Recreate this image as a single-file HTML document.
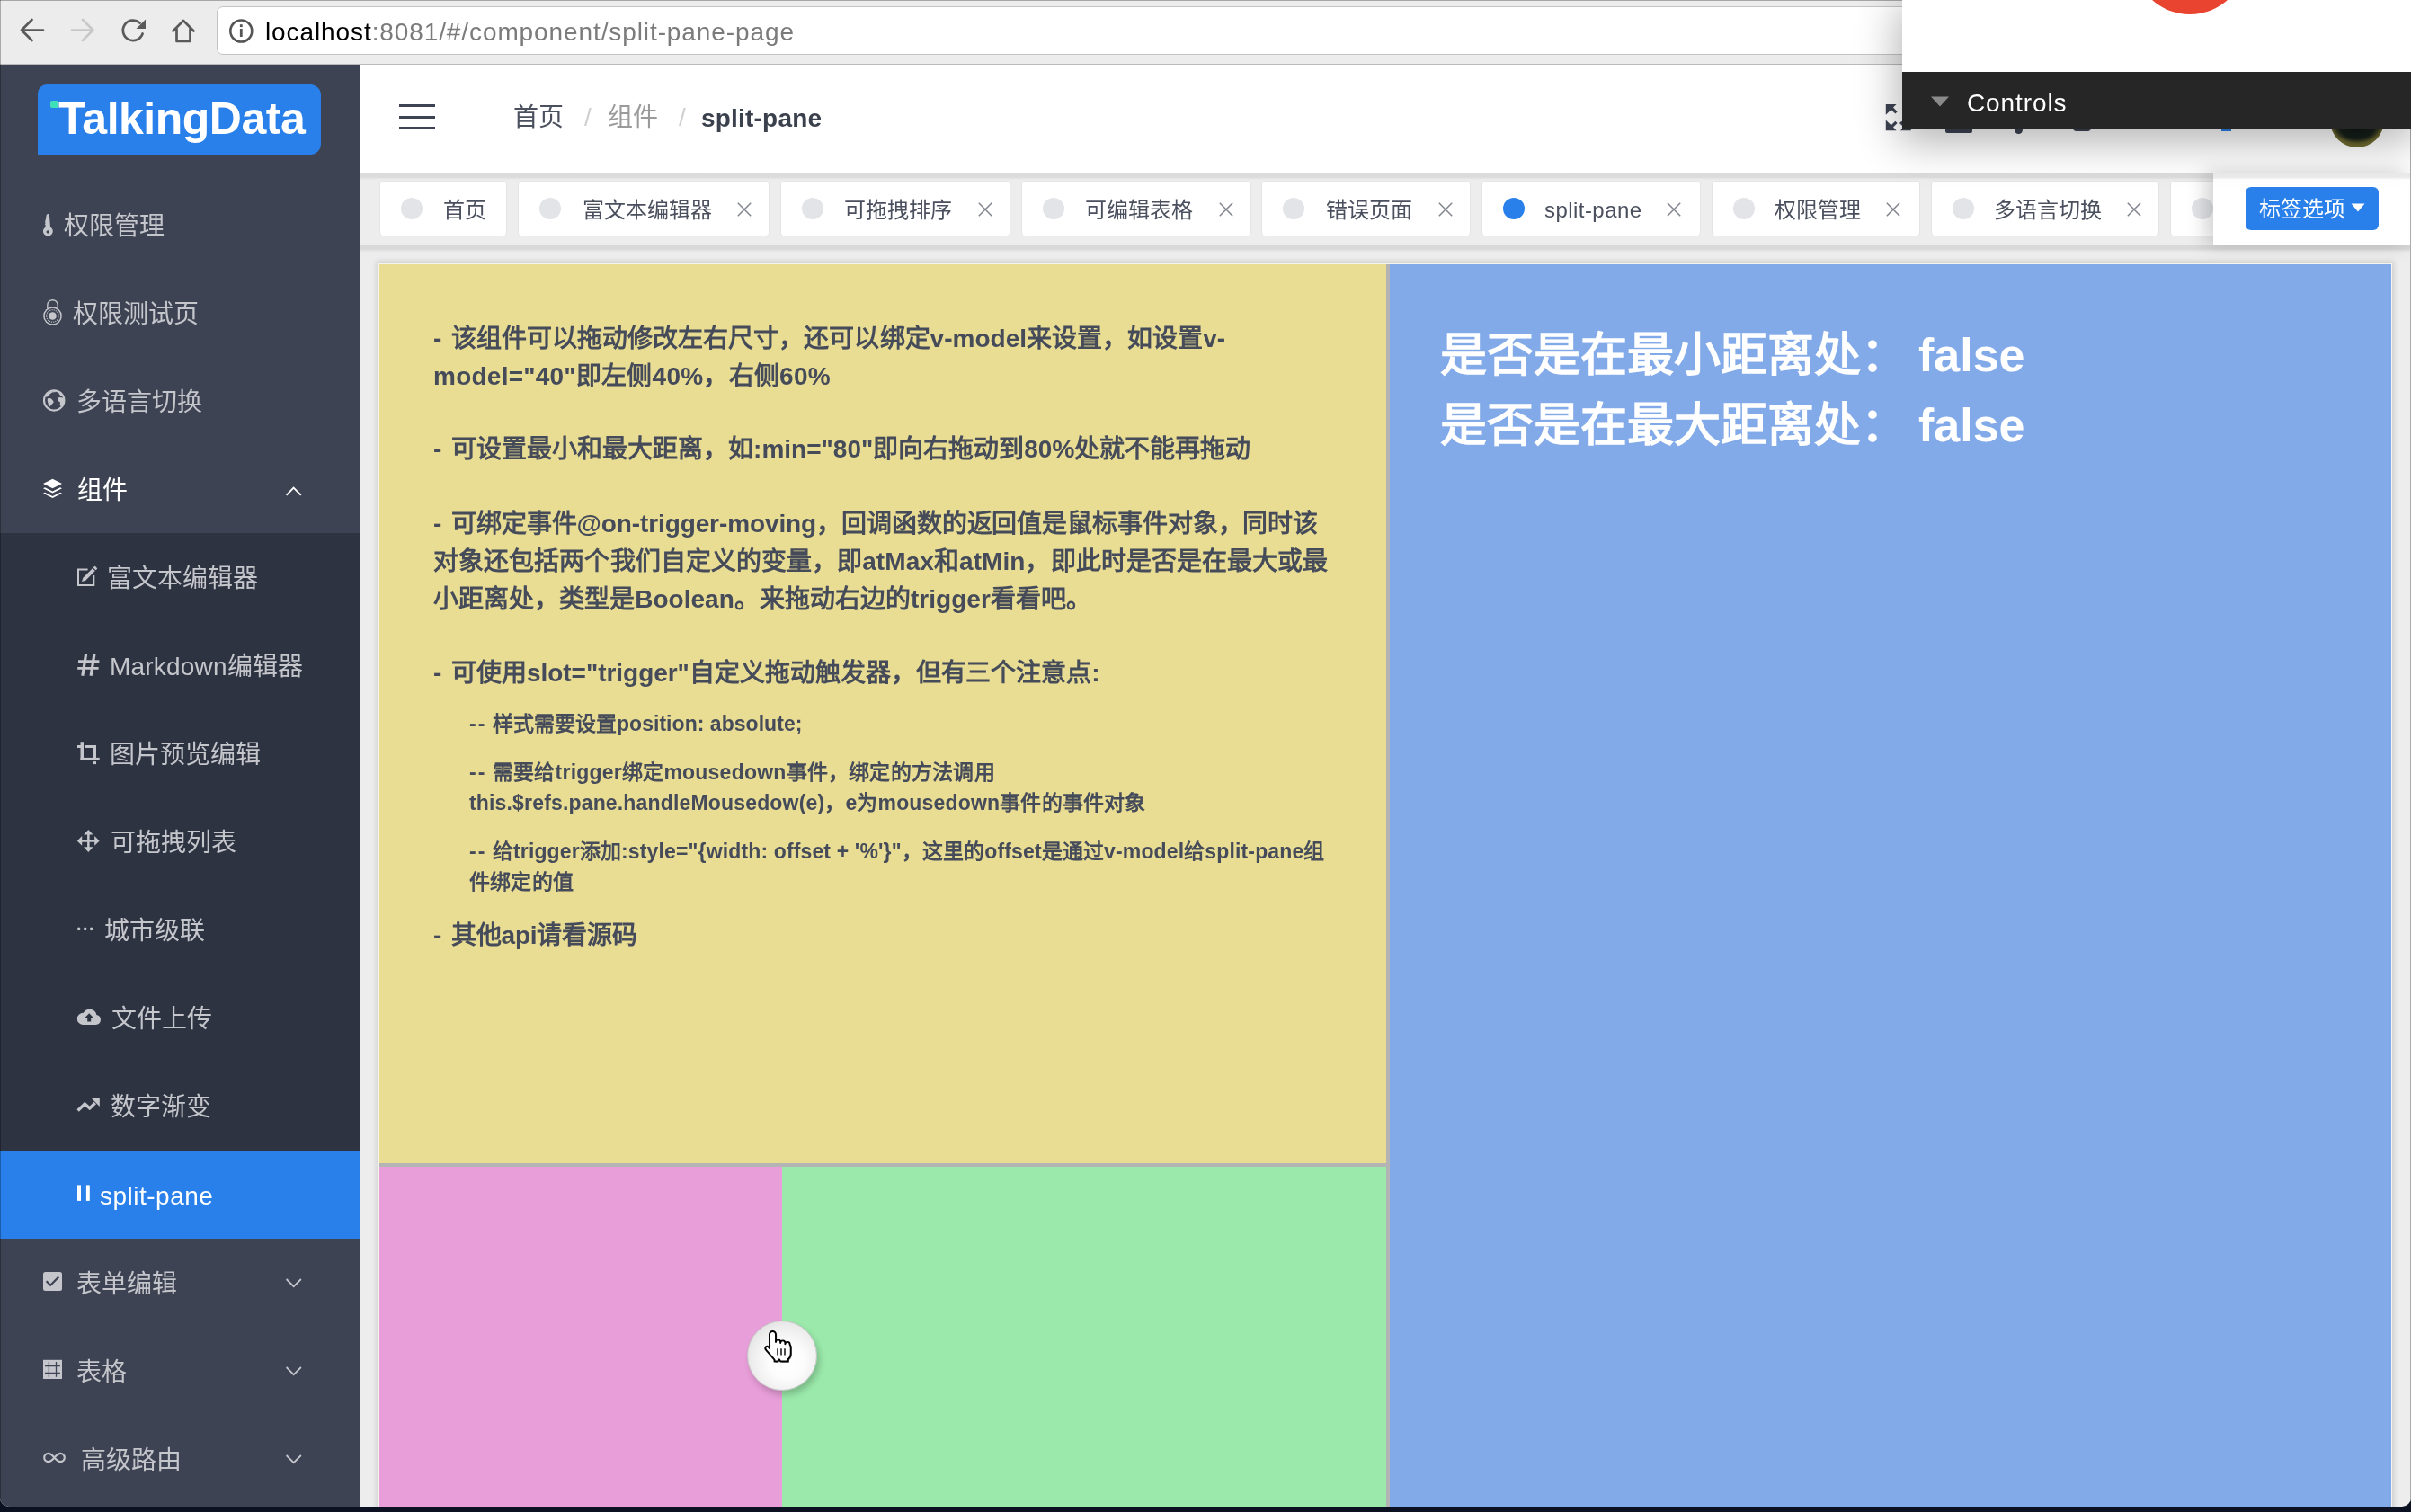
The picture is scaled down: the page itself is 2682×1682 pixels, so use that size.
<!DOCTYPE html>
<html lang="zh-CN"><head><meta charset="utf-8">
<style>
*{box-sizing:border-box;margin:0;padding:0}
html,body{width:2682px;height:1682px;overflow:hidden;background:#0b1120}
body{font-family:"Liberation Sans",sans-serif;position:relative}
.a{position:absolute}
.nw{white-space:nowrap;will-change:transform}
#win{position:absolute;left:0;top:0;width:2682px;height:1676px;overflow:hidden;border-radius:0 0 10px 10px;background:#ededed}
/* toolbar */
#tb{left:0;top:0;width:2682px;height:72px;background:#ececec;border-top:1px solid #a6a6a6;border-bottom:1px solid #b9b9b9}
#addr{left:241px;top:7px;width:2000px;height:54px;background:#fff;border:1px solid #c3c3c3;border-radius:7px}
#url{left:295px;top:16px;font-size:28px;line-height:40px;color:#7b7b7b;letter-spacing:0.9px}
#url b{font-weight:normal;color:#000}
/* sidebar */
#sb{left:0;top:72px;width:400px;height:1604px;background:#3e4353}
#logo{left:42px;top:94px;width:315px;height:78px;background:#2a80ea;border-radius:10px 12px 12px 0}
.mi{left:0;width:400px;height:98px}
.mt{font-size:28px;line-height:98px;color:#c4c6cb;top:0}
.sub{left:0;top:593px;width:400px;height:785px;background:#2f3443}
.ic{position:absolute}
.tab{top:201px;height:62px;background:#fff;border:1px solid #e4e4e4;border-radius:4px}
.dot{top:220px;width:24px;height:24px;border-radius:50%;background:#e3e4e7}
.tt{top:214px;font-size:24px;line-height:40px;color:#4b505e}
.bc{top:111px;font-size:28px;line-height:40px}
.pt{left:482px;font-size:28px;line-height:42px;font-weight:bold;color:#464b5a}
.h1{letter-spacing:3px}.h2{letter-spacing:2px}
.ps{left:522px;font-size:23px;line-height:34px;font-weight:bold;color:#464b5a}
.rt{font-size:52px;line-height:78px;font-weight:bold;color:#fff}

</style></head><body>
<div id="win">

<!-- toolbar -->
<div id="tb" class="a"></div>
<svg class="a" style="left:0;top:0" width="240" height="72">
 <g fill="none" stroke="#5a5a5a" stroke-width="2.7" stroke-linecap="round" stroke-linejoin="round">
  <path d="M48 33.5H24.5M35.5 22L24 33.5 35.5 45"/>
 </g>
 <g fill="none" stroke="#c8c8c8" stroke-width="2.7" stroke-linecap="round" stroke-linejoin="round">
  <path d="M80 33.5h23.5M92 22l11.5 11.5L92 45"/>
 </g>
 <g fill="none" stroke="#5a5a5a" stroke-width="2.7" stroke-linecap="round">
  <path d="M158.6 37.5A11.2 11.2 0 1 1 155.5 25.5"/>
 </g>
 <path d="M162 21.5v10.5h-10.5z" fill="#5a5a5a"/>
 <g fill="none" stroke="#5a5a5a" stroke-width="2.7" stroke-linejoin="round" stroke-linecap="round">
  <path d="M192.5 34.5L204 23l11.5 11.5M196.5 32v14h15V32"/>
 </g>
</svg>
<div id="addr" class="a"></div>
<svg class="a" style="left:250px;top:16px" width="36" height="36">
 <circle cx="18.3" cy="18.5" r="12" fill="none" stroke="#555" stroke-width="2.6"/>
 <rect x="16.9" y="16" width="2.8" height="9" fill="#555"/>
 <rect x="16.9" y="11.2" width="2.8" height="2.9" fill="#555"/>
</svg>
<div id="url" class="a nw"><b>localhost</b>:8081/#/component/split-pane-page</div>

<!-- sidebar -->
<div id="sb" class="a"></div>
<div id="logo" class="a"></div>
<div class="a nw" style="left:65px;top:102px;font-size:50px;line-height:60px;font-weight:bold;color:#fff;letter-spacing:-0.5px">TalkingData</div>
<div class="a" style="left:56px;top:112px;width:9px;height:8px;background:#3fe0b8;border-radius:2px"></div>

<!-- menu -->
<div class="a sub" style="left:0;top:593px;width:400px;height:687px;background:#2e3342"></div>
<div class="a" style="left:0;top:1280px;width:400px;height:98px;background:#2a80ea"></div>
<svg class="a" style="left:0;top:200px" width="400" height="1476" viewBox="0 200 400 1476">
 <g fill="#c4c6cc">
  <!-- key -->
  <path d="M51.6 239.5a1.7 1.7 0 0 1 3.3 -0.3l1.1 13.3a5.4 5.4 0 1 1 -5.6 0.2l0.3 -2.3 -0.8 -0.9 0.8 -0.9 -0.8 -0.9 0.8 -0.9 -0.8 -0.9 0.8 -0.9z M53.3 256.2a1.7 1.7 0 1 0 0.01 0z" fill-rule="evenodd"/>
 </g>
 <g fill="none" stroke="#c4c6cc">
  <!-- lock -->
  <path d="M52.8 343.6v-4.2a5.7 5.7 0 0 1 11.4 0v4.2" stroke-width="1.4"/>
  <circle cx="58.5" cy="351.5" r="9.6" stroke-width="1.5"/>
  <circle cx="58.5" cy="351.5" r="6.8" stroke-width="1.1" stroke-dasharray="1.2 1"/>
 </g>
 <circle cx="58.5" cy="351.5" r="4.3" fill="#c4c6cc"/>
 <!-- globe -->
 <circle cx="60.2" cy="445.4" r="11.2" fill="none" stroke="#c4c6cc" stroke-width="2.1"/>
 <path fill="#c4c6cc" d="M50.5 441.4L52.4 441.4 54.8 439 58 436.6 62.5 436.1 64.9 436.6 65.9 438.2 67.2 440.3 69.9 441.4A10.5 10.5 0 0 0 50.5 441.4Z M53 443.3L56.1 443 58.5 445.1 59.8 447.2 58 449.6 55.9 451.7 54.3 453 53.8 450.1 52.7 445.6Z M64.1 442.5L66.5 441.9 69.1 442.2 71.5 443.5 71.5 447.5 69.6 450.4 67.5 452.2 66.7 449.3 67 447.5 65.1 446.2 64.1 445.1Z"/>
 <!-- layers (white) -->
 <g fill="#fff">
  <path d="M48 538.1L58.5 532.8 69 538.1 58.5 543.2z"/>
  <path d="M48 543.3l2 -1 8.5 4.3 8.5 -4.3 2 1 -10.5 5.3z"/>
  <path d="M48 548.7l2 -1 8.5 4.3 8.5 -4.3 2 1 -10.5 5.4z"/>
 </g>
 <!-- chevron up -->
 <path d="M318.6 550.8l8 -8.2 8.2 8.2" fill="none" stroke="#fff" stroke-width="1.8"/>
 <!-- edit -->
 <g fill="none" stroke="#c4c6cc" stroke-width="2">
  <path d="M97.6 633.6H87V651h17.3v-11"/>
 </g>
 <path fill="#c4c6cc" d="M91 647l1.3 -4.2 10.6 -10.6 2.9 2.9 -10.6 10.6z M103.7 631.4l1.3 -1.3a0.8 0.8 0 0 1 1.1 0l1.8 1.8a0.8 0.8 0 0 1 0 1.1l-1.3 1.3z"/>
 <!-- hash -->
 <g fill="none" stroke="#c4c6cc" stroke-width="3.2">
  <path d="M95.7 727.2l-3.9 24.6M105 727.2l-3.9 24.6"/>
  <path d="M87 735.6h23.4M86.2 743.4h23.4" stroke-width="2.9"/>
 </g>
 <!-- crop -->
 <g fill="#c4c6cc">
  <rect x="89.5" y="825.2" width="3.5" height="20.7"/>
  <rect x="86" y="829" width="7" height="3"/>
  <rect x="94.2" y="829" width="12.8" height="3"/>
  <rect x="103.3" y="829" width="3.7" height="14"/>
  <rect x="89.5" y="842.9" width="21.2" height="3"/>
  <rect x="103.3" y="847.1" width="3.7" height="3"/>
 </g>
 <!-- move -->
 <g fill="#c4c6cc">
  <rect x="97.1" y="928" width="2.5" height="15"/>
  <rect x="90.8" y="934.2" width="15" height="2.5"/>
  <path d="M98.3 923l5.2 5.6h-10.4z M98.3 947.9l5.2 -5.6h-10.4z M85.8 935.4l5.4 -5.3v10.6z M110.6 935.4l-5.4 -5.3v10.6z"/>
 </g>
 <!-- dots -->
 <g fill="#c4c6cc"><circle cx="87.7" cy="1033.4" r="1.8"/><circle cx="94.7" cy="1033.4" r="1.8"/><circle cx="101.7" cy="1033.4" r="1.8"/></g>
 <!-- cloud upload -->
 <path fill="#c4c6cc" fill-rule="evenodd" d="M92 1140h14.5a5.6 5.6 0 0 0 0.9 -11.1 7.9 7.9 0 0 0 -14.6 -2.1 6.6 6.6 0 0 0 -0.8 13.2z M99.2 1127.3l-5.2 5.3h3.2v4h4v-4h3.1z"/>
 <!-- trend -->
 <path fill="none" stroke="#c4c6cc" stroke-width="3.4" stroke-linejoin="miter" d="M86.6 1235.5l7.7 -7.5 5.5 5 6 -6"/>
 <path fill="#c4c6cc" d="M102 1222h8.8v8.9z"/>
 <!-- pause -->
 <g fill="#fff"><rect x="86" y="1318.4" width="4" height="17.5"/><rect x="95.9" y="1318.4" width="3.9" height="17.5"/></g>
 <!-- checkbox -->
 <rect x="48" y="1415" width="21" height="21" rx="2.5" fill="#c4c6cc"/>
 <path d="M51.6 1425.2l4.6 4.5 9.1 -9.2" fill="none" stroke="#3e4353" stroke-width="2.3"/>
 <!-- grid -->
 <rect x="48" y="1512.8" width="21" height="21.2" fill="#c4c6cc"/>
 <g stroke="#3e4353" stroke-width="1.3" fill="none"><path d="M54.4 1515v16.8M62.5 1515v16.8M50 1519.5h16.9M50 1527.5h16.9"/></g>
 <!-- infinity -->
 <path fill="none" stroke="#c4c6cc" stroke-width="2.2" d="M60.5 1621.5c-2.5 -2.6 -4 -4.6 -6.7 -4.6a4.6 4.6 0 0 0 0 9.2c2.7 0 4.2 -2 6.7 -4.6s4 -4.6 6.7 -4.6a4.6 4.6 0 0 1 0 9.2c-2.7 0 -4.2 -2 -6.7 -4.6z"/>
 <!-- chevrons down -->
 <g fill="none" stroke="#c4c6cc" stroke-width="1.8">
  <path d="M318.6 1423l8.1 8.2 8.2 -8.2"/>
  <path d="M318.6 1521l8.1 8.2 8.2 -8.2"/>
  <path d="M318.6 1619l8.1 8.2 8.2 -8.2"/>
 </g>
</svg>
<div class="a nw mt" style="left:71px;top:203px">权限管理</div>
<div class="a nw mt" style="left:81px;top:301px">权限测试页</div>
<div class="a nw mt" style="left:85px;top:399px">多语言切换</div>
<div class="a nw mt" style="left:86px;top:497px;color:#fff">组件</div>
<div class="a nw mt" style="left:119px;top:595px">富文本编辑器</div>
<div class="a nw mt" style="left:122px;top:693px;letter-spacing:0.2px">Markdown编辑器</div>
<div class="a nw mt" style="left:122px;top:791px">图片预览编辑</div>
<div class="a nw mt" style="left:123px;top:889px">可拖拽列表</div>
<div class="a nw mt" style="left:116px;top:987px">城市级联</div>
<div class="a nw mt" style="left:124px;top:1085px">文件上传</div>
<div class="a nw mt" style="left:123px;top:1183px">数字渐变</div>
<div class="a nw mt" style="left:111px;top:1282px;color:#fff;letter-spacing:0.5px">split-pane</div>
<div class="a nw mt" style="left:85px;top:1380px">表单编辑</div>
<div class="a nw mt" style="left:85px;top:1478px">表格</div>
<div class="a nw mt" style="left:90px;top:1576px">高级路由</div>

<!-- header -->
<div class="a" style="left:400px;top:72px;width:2282px;height:120px;background:#fff"></div>
<div class="a" style="left:444px;top:116px;width:40px;height:3px;background:#3e4353"></div>
<div class="a" style="left:444px;top:128.5px;width:40px;height:3px;background:#3e4353"></div>
<div class="a" style="left:444px;top:141px;width:40px;height:3px;background:#3e4353"></div>
<div class="a nw bc" style="left:571px;color:#4b505e">首页</div>
<div class="a nw bc" style="left:650px;color:#cfcfcf">/</div>
<div class="a nw bc" style="left:676px;color:#9a9a9a">组件</div>
<div class="a nw bc" style="left:755px;color:#cfcfcf">/</div>
<div class="a nw bc" style="left:780px;top:112px;color:#3b404d;font-weight:bold;letter-spacing:0.2px">split-pane</div>
<!-- tabs bar -->
<div class="a" style="left:400px;top:272px;width:2282px;height:9px;background:linear-gradient(#d9d9d9 0,#d9d9d9 5px,#ebebeb 8px)"></div>
<div class="a tab" style="left:422px;width:142px"></div>
<div class="a dot" style="left:446px"></div>
<div class="a nw tt" style="left:493px">首页</div>
<div class="a tab" style="left:576px;width:280px"></div>
<div class="a dot" style="left:600px"></div>
<div class="a nw tt" style="left:648px">富文本编辑器</div>
<svg class="a" style="left:820px;top:225px" width="16" height="16"><path d="M0.8 0.8l14.4 14.4M15.2 0.8L0.8 15.2" stroke="#80848d" stroke-width="1.5" fill="none"/></svg>
<div class="a tab" style="left:868px;width:256px"></div>
<div class="a dot" style="left:892px"></div>
<div class="a nw tt" style="left:939px">可拖拽排序</div>
<svg class="a" style="left:1088px;top:225px" width="16" height="16"><path d="M0.8 0.8l14.4 14.4M15.2 0.8L0.8 15.2" stroke="#80848d" stroke-width="1.5" fill="none"/></svg>
<div class="a tab" style="left:1136px;width:256px"></div>
<div class="a dot" style="left:1160px"></div>
<div class="a nw tt" style="left:1207px">可编辑表格</div>
<svg class="a" style="left:1356px;top:225px" width="16" height="16"><path d="M0.8 0.8l14.4 14.4M15.2 0.8L0.8 15.2" stroke="#80848d" stroke-width="1.5" fill="none"/></svg>
<div class="a tab" style="left:1403px;width:233px"></div>
<div class="a dot" style="left:1427px"></div>
<div class="a nw tt" style="left:1475px">错误页面</div>
<svg class="a" style="left:1600px;top:225px" width="16" height="16"><path d="M0.8 0.8l14.4 14.4M15.2 0.8L0.8 15.2" stroke="#80848d" stroke-width="1.5" fill="none"/></svg>
<div class="a tab" style="left:1648px;width:244px"></div>
<div class="a dot" style="left:1672px;background:#2a80ea"></div>
<div class="a nw tt" style="left:1718px;letter-spacing:0.45px">split-pane</div>
<svg class="a" style="left:1854px;top:225px" width="16" height="16"><path d="M0.8 0.8l14.4 14.4M15.2 0.8L0.8 15.2" stroke="#80848d" stroke-width="1.5" fill="none"/></svg>
<div class="a tab" style="left:1904px;width:232px"></div>
<div class="a dot" style="left:1928px"></div>
<div class="a nw tt" style="left:1974px">权限管理</div>
<svg class="a" style="left:2098px;top:225px" width="16" height="16"><path d="M0.8 0.8l14.4 14.4M15.2 0.8L0.8 15.2" stroke="#80848d" stroke-width="1.5" fill="none"/></svg>
<div class="a tab" style="left:2148px;width:254px"></div>
<div class="a dot" style="left:2172px"></div>
<div class="a nw tt" style="left:2218px">多语言切换</div>
<svg class="a" style="left:2366px;top:225px" width="16" height="16"><path d="M0.8 0.8l14.4 14.4M15.2 0.8L0.8 15.2" stroke="#80848d" stroke-width="1.5" fill="none"/></svg>
<div class="a tab" style="left:2414px;width:286px"></div>
<div class="a dot" style="left:2438px"></div>
<div class="a" style="left:2462px;top:192px;width:220px;height:80px;background:#fff;box-shadow:-8px 0 20px 0 rgba(0,0,0,0.19)"></div>
<div class="a" style="left:400px;top:192px;width:2282px;height:9px;background:linear-gradient(rgba(0,0,0,0.075) 0,rgba(0,0,0,0.075) 5px,rgba(0,0,0,0) 8px)"></div>
<div class="a" style="left:2498px;top:208px;width:148px;height:48px;background:#2a80ea;border-radius:6px"></div>
<div class="a nw" style="left:2513px;top:209px;font-size:24px;line-height:48px;color:#fff">标签选项</div>
<svg class="a" style="left:2614px;top:224px" width="20" height="14"><path d="M1.5 2.5h15l-7.5 9z" fill="#fff"/></svg>

<!-- content card -->
<div class="a" style="left:421px;top:293px;width:2240px;height:1400px;background:#f6f4ef;box-shadow:0 0 6px 2px rgba(0,0,0,0.14)"></div>
<div class="a" style="left:422px;top:294px;width:1120px;height:1000px;background:#e9dd93"></div>
<div class="a" style="left:422px;top:1294px;width:1120px;height:4px;background:#b4b4b4"></div>
<div class="a" style="left:422px;top:1298px;width:448px;height:400px;background:#e89ed9"></div>
<div class="a" style="left:870px;top:1298px;width:672px;height:400px;background:#9beaab"></div>
<div class="a" style="left:1542px;top:294px;width:4px;height:1400px;background:#b4b4b4"></div>
<div class="a" style="left:1546px;top:294px;width:1114px;height:1400px;background:#83aae8"></div>

<!-- left text -->
<div class="a nw pt" style="top:356px;letter-spacing:0.022px"><span class="h1">-</span> 该组件可以拖动修改左右尺寸，还可以绑定v-model来设置，如设置v-</div>
<div class="a nw pt" style="top:398px;letter-spacing:0.238px">model="40"即左侧40%，右侧60%</div>
<div class="a nw pt" style="top:479px;letter-spacing:0.000px"><span class="h1">-</span> 可设置最小和最大距离，如:min="80"即向右拖动到80%处就不能再拖动</div>
<div class="a nw pt" style="top:562px;letter-spacing:-0.100px"><span class="h1">-</span> 可绑定事件@on-trigger-moving，回调函数的返回值是鼠标事件对象，同时该</div>
<div class="a nw pt" style="top:604px;letter-spacing:0.072px">对象还包括两个我们自定义的变量，即atMax和atMin，即此时是否是在最大或最</div>
<div class="a nw pt" style="top:646px;letter-spacing:0.025px">小距离处，类型是Boolean。来拖动右边的trigger看看吧。</div>
<div class="a nw pt" style="top:728px;letter-spacing:-0.034px"><span class="h1">-</span> 可使用slot="trigger"自定义拖动触发器，但有三个注意点:</div>
<div class="a nw ps" style="top:788px;letter-spacing:0.038px"><span class="h2">--</span> 样式需要设置position: absolute;</div>
<div class="a nw ps" style="top:842px;letter-spacing:0.219px"><span class="h2">--</span> 需要给trigger绑定mousedown事件，绑定的方法调用</div>
<div class="a nw ps" style="top:876px;letter-spacing:0.165px">this.$refs.pane.handleMousedow(e)，e为mousedown事件的事件对象</div>
<div class="a nw ps" style="top:930px;letter-spacing:0.137px"><span class="h2">--</span> 给trigger添加:style="{width: offset + '%'}"，这里的offset是通过v-model给split-pane组</div>
<div class="a nw ps" style="top:964px;letter-spacing:0.200px">件绑定的值</div>
<div class="a nw pt" style="top:1020px;letter-spacing:-0.200px"><span class="h1">-</span> 其他api请看源码</div>

<!-- right text -->
<div class="a nw rt" style="left:1602px;top:356px">是否是在最小距离处：</div>
<div class="a nw rt" style="left:2134px;top:356px">false</div>
<div class="a nw rt" style="left:1602px;top:434px">是否是在最大距离处：</div>
<div class="a nw rt" style="left:2134px;top:434px">false</div>

<!-- trigger -->
<div class="a" style="left:831px;top:1469px;width:78px;height:78px;border-radius:50%;border:1px solid #c6c6c6;background:radial-gradient(circle at 56% 58%,#fff 0,#fcfcfc 32%,#ececec 64%,#d9d9d9 88%,#cdcdcd 100%);box-shadow:3px 5px 7px rgba(0,0,0,0.2)"></div>
<svg class="a" style="left:840px;top:1475px" width="50" height="50" viewBox="0 0 50 50">
 <path d="M16 25V9.5a3.5 3.5 0 0 1 7 0V18a2.6 2.6 0 0 1 5.2 0V19a2.6 2.6 0 0 1 5.2 0V20.3a2.6 2.6 0 0 1 5.2 0.3L39.7 23V31Q39.7 34.5 36.8 37V39.5H28.3L26.8 37.2 25.3 39.5H21.5V37.6L12.4 27.2Q10.3 24.7 12.1 23.1Q14 21.6 16 25Z" fill="#000" transform="translate(1.2 1.2)" opacity="0.35"/>
 <path d="M16 25V9.5a3.5 3.5 0 0 1 7 0V18a2.6 2.6 0 0 1 5.2 0V19a2.6 2.6 0 0 1 5.2 0V20.3a2.6 2.6 0 0 1 5.2 0.3L39.7 23V31Q39.7 34.5 36.8 37V39.5H28.3L26.8 37.2 25.3 39.5H21.5V37.6L12.4 27.2Q10.3 24.7 12.1 23.1Q14 21.6 16 25Z" fill="#fff" stroke="#000" stroke-width="1.9" stroke-linejoin="round"/>
 <path d="M25 25.3v7.3M29 25.3v7.3M33 25.3v7.3" stroke="#000" stroke-width="1.4"/>
</svg>

<!-- header right icons (under overlay shadow) -->
<svg class="a" style="left:2090px;top:110px" width="40" height="40" viewBox="2090 110 40 40">
 <g fill="#3e4353">
  <path d="M2097.8 116h11.8l-3.6 3.6 4.6 4.6-2.3 2.3-4.6-4.6-5.9 5.9z"/>
  <path d="M2097.8 145.2h11.8l-3.6-3.6 4.6-4.6-2.3-2.3-4.6 4.6-5.9-5.9z"/>
  <path d="M2125.8 145.2h-11.8l3.6-3.6-4.6-4.6 2.3-2.3 4.6 4.6 5.9-5.9z"/>
 </g>
</svg>
<div class="a" style="left:2240.5px;top:139.5px;width:9px;height:9px;border-radius:50%;background:#3e4353"></div>
<div class="a" style="left:2306px;top:140px;width:20px;height:6px;border-radius:0 0 4px 4px;background:#3e4353"></div>
<div class="a" style="left:2471px;top:140px;width:11px;height:6px;background:#2a80ea"></div>
<div class="a" style="left:2164px;top:140px;width:30px;height:8px;background:#3e4353;border-radius:2px"></div>
<div class="a" style="left:2592px;top:104px;width:60px;height:60px;border-radius:50%;background:radial-gradient(ellipse 45% 30% at 50% 62%,#0f1714 0,#17201b 70%,rgba(0,0,0,0) 100%),radial-gradient(circle at 50% 40%,#2a3024 0,#3b3b22 50%,#6f6a2f 72%,#857f3c 100%)"></div>

<!-- window borders -->
<div class="a" style="left:2681px;top:72px;width:1px;height:1604px;background:#ababab"></div>
<div class="a" style="left:0;top:0;width:1px;height:1676px;background:rgba(0,0,0,0.28)"></div>
<!-- overlay -->
<div class="a" style="left:2116px;top:0;width:566px;height:144px;box-shadow:0 10px 44px 4px rgba(0,0,0,0.3)"></div>
<div class="a" style="left:2116px;top:0;width:566px;height:80px;background:#fff;overflow:hidden">
  <div class="a" style="left:257px;top:-110px;width:126px;height:126px;border-radius:50%;background:#e8442f"></div>
</div>
<div class="a" style="left:2116px;top:80px;width:566px;height:64px;background:#262626"></div>
<svg class="a" style="left:2146px;top:105px" width="24" height="16"><path d="M2 2.5h20l-10 11z" fill="#8a8a8a"/></svg>
<div class="a nw" style="left:2188px;top:95px;font-size:28px;line-height:40px;color:#fff;letter-spacing:0.9px">Controls</div>


</div>
</body></html>
